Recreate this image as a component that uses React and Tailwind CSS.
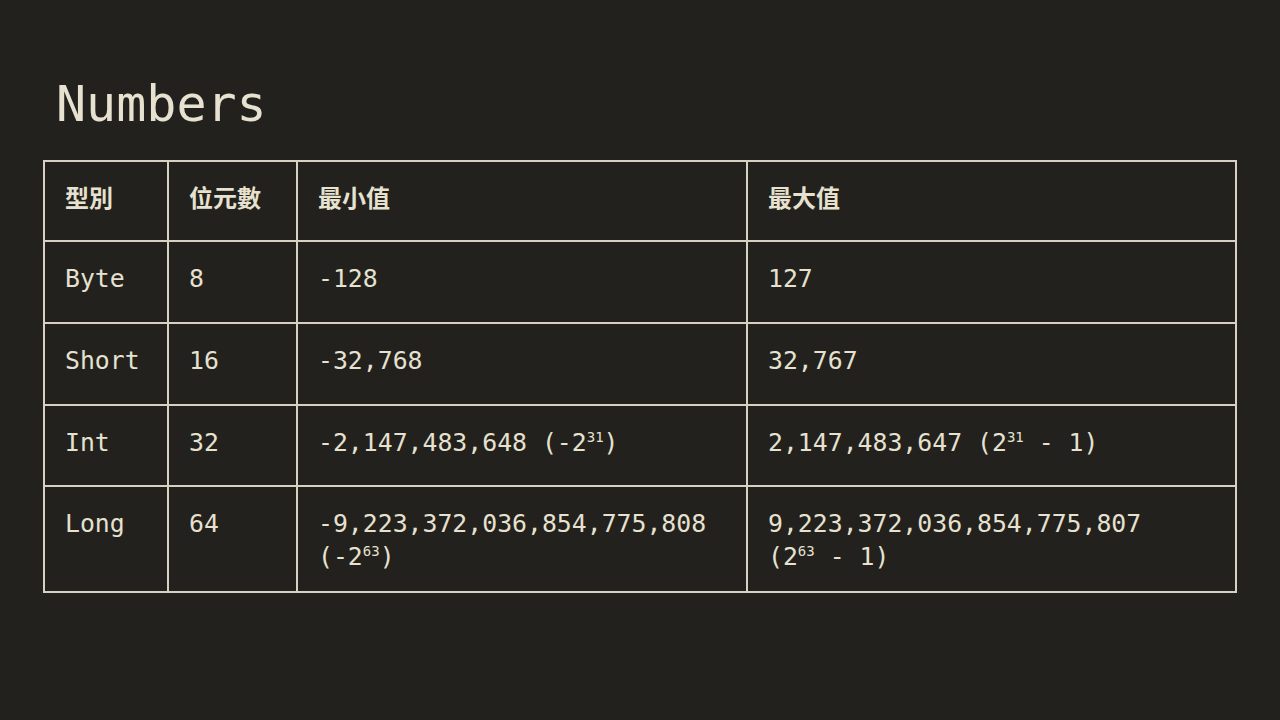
const rows = [
  { type: "Byte", bits: "8", min: <>-128</>, max: <>127</> },
  { type: "Short", bits: "16", min: <>-32,768</>, max: <>32,767</> },
  {
    type: "Int",
    bits: "32",
    min: (
      <>
        -2,147,483,648 (-2<Sup>31</Sup>)
      </>
    ),
    max: (
      <>
        2,147,483,647 (2<Sup>31</Sup> - 1)
      </>
    ),
  },
  {
    type: "Long",
    bits: "64",
    min: (
      <>
        -9,223,372,036,854,775,808
        <br />
        (-2<Sup>63</Sup>)
      </>
    ),
    max: (
      <>
        9,223,372,036,854,775,807
        <br />
        (2<Sup>63</Sup> - 1)
      </>
    ),
  },
];

function Sup({ children }) {
  return (
    <sup className="relative -top-[9px] align-baseline text-[14px] leading-none">
      {children}
    </sup>
  );
}

const heights = ["h-[80px]", "h-[80px]", "h-[79px]", "h-[104px]"];

const cell = "bg-[#22211d] pl-5 pr-3";

export default function App() {
  return (
    <div
      className="w-[1280px] h-[720px] bg-[#22211d] text-[#e7e1d0] overflow-hidden"
      style={{ fontFamily: '"DejaVu Sans Mono", "Liberation Mono", "Noto Sans CJK TC", monospace' }}
    >
      <h1 className="pt-[79px] pl-[56px] text-[50px] leading-[50px] font-normal">Numbers</h1>
      <div className="mt-[31px] ml-[43px] w-[1194px] grid grid-cols-[122px_127px_448px_487px] gap-[2px] p-[2px] bg-[#d6d1c2]">
        <div
          className="contents"
          style={{ fontFamily: '"Noto Sans CJK TC", "Noto Sans CJK SC", sans-serif' }}
        >
          {["型別", "位元數", "最小值", "最大值"].map((h) => (
            <div key={h} className={`${cell} pt-[18px] h-[78px] text-[24px] leading-[33px] font-bold`}>
              {h}
            </div>
          ))}
        </div>
        {rows.map((r, i) => (
          <div key={r.type} className="contents text-[24.8px] leading-[33px]">
            <div className={`${cell} pt-[20px] ${heights[i]}`}>{r.type}</div>
            <div className={`${cell} pt-[20px] ${heights[i]}`}>{r.bits}</div>
            <div className={`${cell} pt-[20px] ${heights[i]}`}>{r.min}</div>
            <div className={`${cell} pt-[20px] ${heights[i]}`}>{r.max}</div>
          </div>
        ))}
      </div>
    </div>
  );
}
